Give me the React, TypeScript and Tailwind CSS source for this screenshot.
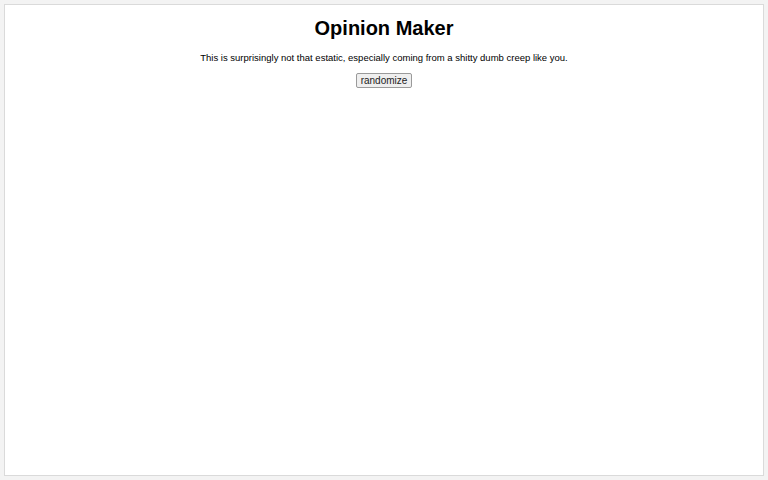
import { useState } from "react";

const OPENERS = ["This is surprisingly not that estatic", "This is honestly pretty bland", "This is oddly not that bad"];
const MIDDLES = ["especially coming from a shitty dumb creep like you", "especially from someone like you"];

export default function App() {
  const [line, setLine] = useState(
    "This is surprisingly not that estatic, especially coming from a shitty dumb creep like you."
  );

  const randomize = () => {
    const a = OPENERS[Math.floor(Math.random() * OPENERS.length)];
    const b = MIDDLES[Math.floor(Math.random() * MIDDLES.length)];
    setLine(`${a}, ${b}.`);
  };

  return (
    <div className="h-[480px] bg-[#f3f3f3] p-[4px] font-['Liberation_Sans',Arial,sans-serif]">
      <div className="flex h-[472px] flex-col items-center border border-[#dadada] bg-white">
        <h1 className="mt-[9px] text-[20px] leading-[28px] font-bold text-black">Opinion Maker</h1>
        <p className="mt-[10px] text-[9.5px] leading-[12px] text-black">{line}</p>
        <button
          onClick={randomize}
          className="mt-[9px] h-[15px] rounded-[2px] border border-[#9a9a9a] bg-[#efefef] px-[4px] text-[10px] leading-[12px] text-[#222]"
        >
          randomize
        </button>
      </div>
    </div>
  );
}
